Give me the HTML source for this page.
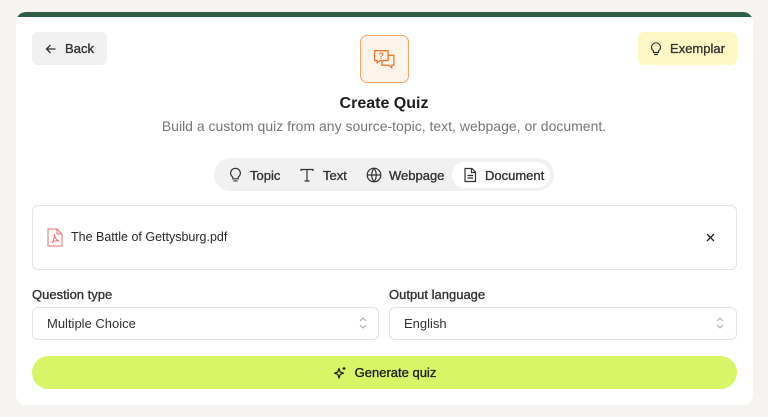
<!DOCTYPE html>
<html><head><style>
*{box-sizing:border-box;margin:0;padding:0}
body{width:768px;height:417px;background:#f5f4f0;font-family:"Liberation Sans",sans-serif;color:#222;position:relative;overflow:hidden}
.card{position:absolute;left:16px;top:12px;width:737px;height:393px;background:#fff;border-radius:10px;overflow:hidden}
.bar{position:absolute;left:0;top:0;right:0;height:5px;background:#2e5e45}
.abs{position:absolute}
.m{-webkit-text-stroke:0.35px currentColor}
.btn{position:absolute;display:flex;align-items:center;justify-content:center;gap:8px;font-size:13px;border-radius:6px;color:#333;-webkit-text-stroke:0.35px currentColor}
.sel{position:absolute;height:33px;border:1px solid #e4e4e4;border-radius:6px;font-size:13px;display:flex;align-items:center;padding-left:14px;color:#333}
.lbl{position:absolute;font-size:13px;color:#333;-webkit-text-stroke:0.35px currentColor}
.t{position:absolute;top:168px;font-size:13px;color:#333;-webkit-text-stroke:0.35px currentColor}
</style></head><body>
<div class="card"><div class="bar"></div></div>
<div class="btn" style="left:32px;top:32px;width:75px;height:33px;background:#f1f1f1">
<svg width="12" height="12" viewBox="0 0 12 12" fill="none" stroke="#333" stroke-width="1.3"><path d="M10.5 6H1.5M5.5 2L1.5 6L5.5 10"/></svg>Back</div>
<div class="btn" style="left:638px;top:32px;width:99px;height:33px;background:#fef8c6">
<svg width="12" height="14" viewBox="0 0 12 14" fill="none" stroke="#333" stroke-width="1.2"><path d="M3.5 9C2.2 8 1.5 6.8 1.5 5.3A4.5 4.5 0 0 1 10.5 5.3C10.5 6.8 9.8 8 8.5 9V10.5H3.5Z M4 12.5H8"/></svg>Exemplar</div>
<div class="abs" style="left:360px;top:35px;width:49px;height:48px;border:1.5px solid #f5a46a;background:#fff4ea;border-radius:7px">
<svg class="abs" style="left:11px;top:11px" width="25" height="25" viewBox="0 0 24 24" fill="none" stroke="#ee7a32" stroke-width="1.3" stroke-linejoin="round"><path d="M2.5 3.5h13v9.5H8l-3 2.5V13H2.5Z"/><path d="M15.5 8h5.5v9.5h-2v2.5l-3-2.5H9.5V13"/><text x="6.2" y="11.5" font-size="8.5" font-weight="bold" fill="#ee7a32" stroke="none" font-family="Liberation Sans">?</text></svg></div>
<div class="abs" style="left:0;width:768px;top:95px;text-align:center;font-size:16px;font-weight:bold;color:#1e1e1e">Create Quiz</div>
<div class="abs" style="left:0;width:768px;top:118px;text-align:center;font-size:14px;color:#777">Build a custom quiz from any source-topic, text, webpage, or document.</div>
<div class="abs" style="left:214px;top:158px;width:340px;height:33px;background:#f1f1f1;border-radius:17px"></div>
<div class="abs" style="left:452px;top:162px;width:98px;height:26px;background:#fff;border-radius:13px"></div>
<svg class="abs" style="left:229px;top:167px" width="13" height="16" viewBox="0 0 12 14" fill="none" stroke="#333" stroke-width="1.1"><path d="M3.5 9C2.2 8 1.5 6.8 1.5 5.3A4.5 4.5 0 0 1 10.5 5.3C10.5 6.8 9.8 8 8.5 9V10.5H3.5Z M4 12.5H8"/></svg>
<div class="t" style="left:250px">Topic</div>
<svg class="abs" style="left:299px;top:167px" width="16" height="16" viewBox="0 0 16 16" fill="none" stroke="#333" stroke-width="1.2"><path d="M2 4V2.5H14V4M8 2.5V14M5.5 14H10.5"/></svg>
<div class="t" style="left:323px">Text</div>
<svg class="abs" style="left:366px;top:167px" width="16" height="16" viewBox="0 0 16 16" fill="none" stroke="#333" stroke-width="1.2"><circle cx="8" cy="8" r="6.8"/><path d="M1.2 8H14.8M8 1.2C5 5 5 11 8 14.8M8 1.2C11 5 11 11 8 14.8"/></svg>
<div class="t" style="left:389px">Webpage</div>
<svg class="abs" style="left:463px;top:167px" width="14" height="16" viewBox="0 0 14 16" fill="none" stroke="#333" stroke-width="1.2"><path d="M2 1.5H9L12.5 5V14.5H2Z M8.5 1.5V5.5H12.5 M4.5 8.5H10M4.5 11H10"/></svg>
<div class="t" style="left:485px">Document</div>
<div class="abs" style="left:32px;top:205px;width:705px;height:65px;border:1px solid #e4e4e4;border-radius:6px"></div>
<svg class="abs" style="left:47px;top:228px" width="16" height="19" viewBox="0 0 16 19" fill="none" stroke="#e8726a" stroke-width="1"><path d="M1 1H10L15 6V18H1Z M10 1V6H15"/><path d="M5 15C7 12 8 8 7.5 6C7 8 9 12 12 13C9.5 12.5 6 13 5 15Z"/></svg>
<div class="abs" style="left:71px;top:230px;font-size:12.5px;color:#2a2a2a">The Battle of Gettysburg.pdf</div>
<svg class="abs" style="left:706px;top:233px" width="9" height="9" viewBox="0 0 9 9" stroke="#222" stroke-width="1.3"><path d="M1 1L8 8M8 1L1 8"/></svg>
<div class="lbl" style="left:32px;top:287px">Question type</div>
<div class="lbl" style="left:389px;top:287px">Output language</div>
<div class="sel" style="left:32px;top:307px;width:347px">Multiple Choice</div>
<div class="sel" style="left:389px;top:307px;width:348px">English</div>
<svg class="abs" style="left:359px;top:317px" width="8" height="12" viewBox="0 0 8 12" fill="none" stroke="#aaa" stroke-width="1"><path d="M1 4L4 1L7 4M1 8L4 11L7 8"/></svg>
<svg class="abs" style="left:716px;top:317px" width="8" height="12" viewBox="0 0 8 12" fill="none" stroke="#aaa" stroke-width="1"><path d="M1 4L4 1L7 4M1 8L4 11L7 8"/></svg>
<div class="btn" style="left:32px;top:356px;width:705px;height:33px;background:#d7f566;border-radius:17px;color:#222;font-size:13px">
<svg width="14" height="14" viewBox="0 0 14 14" fill="none" stroke="#222" stroke-width="1.2" stroke-linejoin="round"><path d="M6 2.5L7.2 6L10.5 7.2L7.2 8.4L6 12L4.8 8.4L1.5 7.2L4.8 6Z M11 1V4M9.5 2.5H12.5"/></svg>Generate quiz</div>
</body></html>
